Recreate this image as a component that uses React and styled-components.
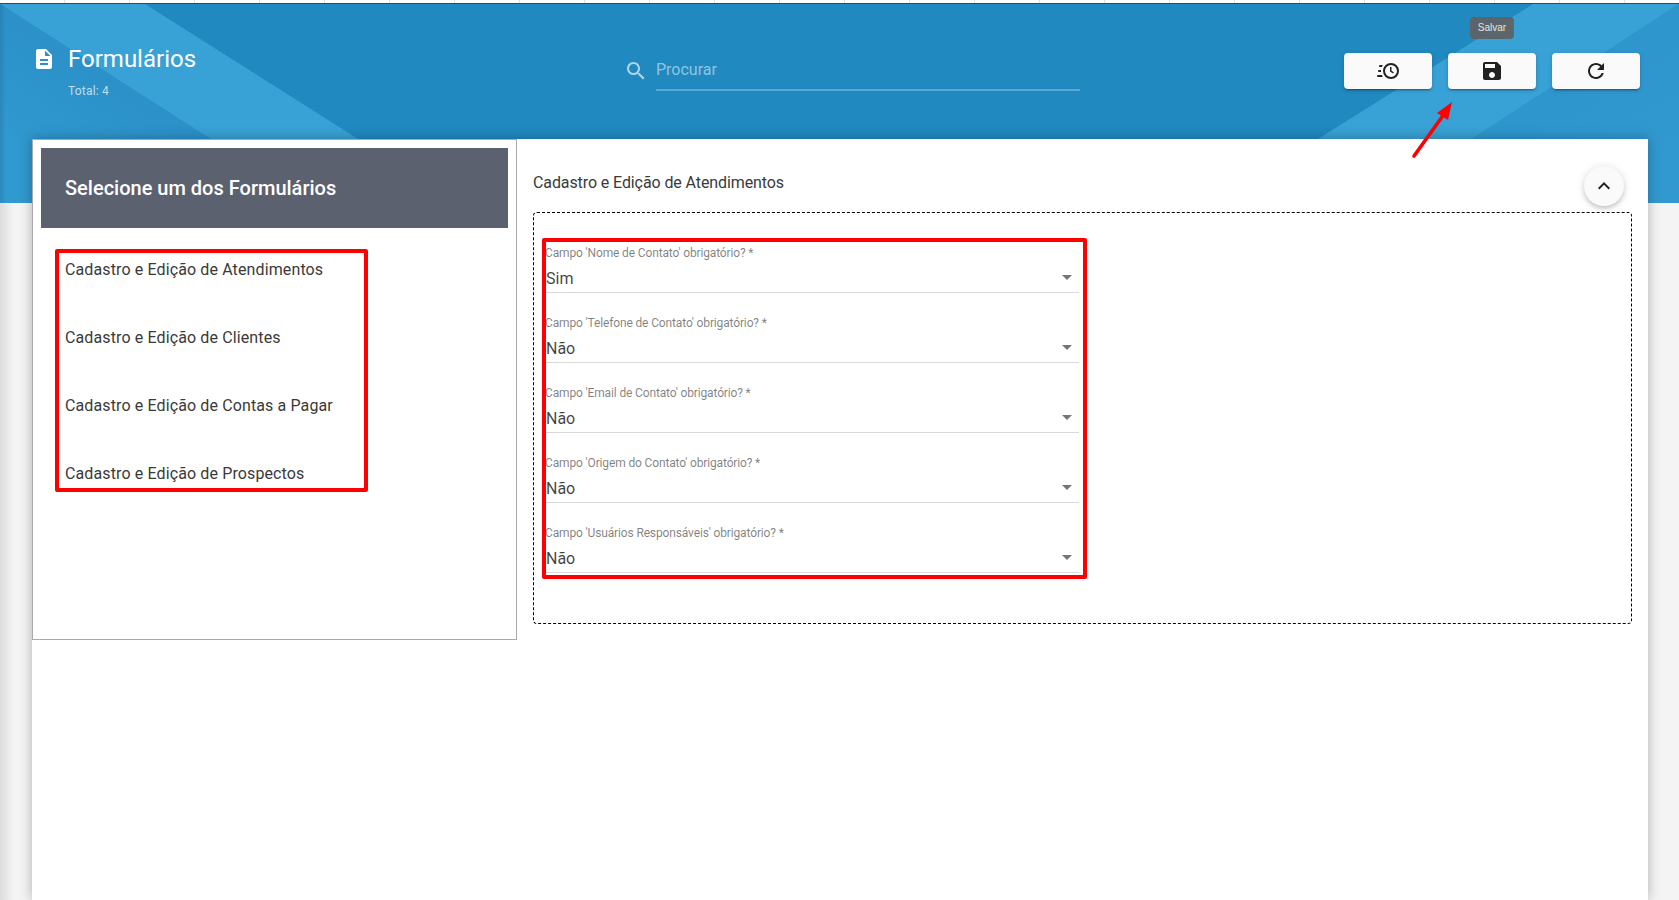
import React from 'react';
import styled, {createGlobalStyle} from 'styled-components';

const GlobalStyle = createGlobalStyle`
  html, body {
    margin: 0;
    height: 100%;
    overflow: hidden;
  }
  body {
    background: #f4f4f4;
    font-family: Roboto, "Liberation Sans", sans-serif;
  }
`

const Page = styled.div`
  height: 900px;
  overflow: hidden;
  background: linear-gradient(to right, #dcdcdc 0, #f4f4f4 14px);
`

const TopStrip = styled.div`
  height: 3px;
  background: repeating-linear-gradient(to right, #fff 0, #fff 64px, #e2e2e2 64px, #e2e2e2 65px);
  border-bottom: 1px solid #1c4f6e;
`

const Header = styled.header`
  position: relative;
  display: flex;
  align-items: flex-start;
  height: 199px;
  background: #2089c0;
  overflow: hidden;
  /* diagonal light bands */
  &::before {
    content: '';
    position: absolute;
    inset: 0;
    background: #38a1d6;
    clip-path: polygon(0 0, 145px 0, 459px 199px, 310px 199px);
  }
  &::after {
    content: '';
    position: absolute;
    inset: 0;
    background: #38a1d6;
    clip-path: polygon(1533px 0, 1679px 0, 1374px 199px, 1216px 199px);
  }
`

const Shade = styled.div`
  position: absolute;
  inset: 0;
  z-index: 1;
  background: ${props => props.$right
    ? 'linear-gradient(147deg, #2e96cd 85%, #3199d0 96%)'
    : 'linear-gradient(to right, rgba(0, 0, 0, 0.1), transparent 6px), linear-gradient(213deg, #2b91c8 85%, #3099cf 95%)'};
  clip-path: ${props => props.$right
    ? 'polygon(1679px 0, 1679px 199px, 1374px 199px)'
    : 'polygon(0 0, 310px 199px, 0 199px)'};
`

const TitleBlock = styled.div`
  position: relative;
  z-index: 2;
  width: 624px;
  padding: 43px 0 0 32px;
  box-sizing: border-box;
  color: #fff;
`

const TitleRow = styled.div`
  display: flex;
  align-items: center;
  gap: 12px;
  height: 24px;
`

const Title = styled.h1`
  margin: 0;
  font-size: 24px;
  font-weight: 400;
  line-height: 24px;
`

const Total = styled.div`
  margin: 12px 0 0 36px;
  font-size: 12px;
  line-height: 16px;
  letter-spacing: 0.2px;
  color: rgba(255, 255, 255, 0.7);
`

const Search = styled.div`
  position: relative;
  z-index: 2;
  display: flex;
  align-items: flex-start;
  gap: 8px;
  width: 456px;
  margin-top: 55px;
  color: rgba(255, 255, 255, 0.65);
`

const SearchField = styled.div`
  flex: 1;
  height: 33px;
  margin-top: -1px;
  font-size: 16px;
  line-height: 24px;
  color: rgba(255, 255, 255, 0.5);
  border-bottom: 2px solid #5aa8d6;
  box-sizing: border-box;
`

const Actions = styled.div`
  position: relative;
  z-index: 2;
  display: flex;
  gap: 16px;
  margin: 49px 39px 0 auto;
`

const ActionButton = styled.button`
  position: relative;
  display: flex;
  align-items: center;
  justify-content: center;
  width: 88px;
  height: 36px;
  padding: 0;
  border: 0;
  border-radius: 4px;
  background: #fafafa;
  color: #212121;
  box-shadow: 0 3px 1px -2px rgba(0, 0, 0, 0.2), 0 2px 2px 0 rgba(0, 0, 0, 0.14), 0 1px 5px 0 rgba(0, 0, 0, 0.12);
`

const Tooltip = styled.span`
  position: absolute;
  top: -36px;
  left: 22px;
  width: 44px;
  height: 22px;
  border-radius: 4px;
  background: rgba(97, 97, 97, 0.9);
  color: #e4e4e4;
  font-size: 10px;
  font-weight: 500;
  line-height: 22px;
  text-align: center;
`

const Main = styled.main`
  position: relative;
  z-index: 3;
  display: flex;
  align-items: flex-start;
  gap: 16px;
  margin: -64px 31px 0 32px;
  height: 761px;
  background: #fff;
  box-shadow: 0 0 12px rgba(0, 0, 0, 0.28);
`

const ListPanel = styled.section`
  flex: none;
  width: 485px;
  height: 501px;
  padding: 8px;
  box-sizing: border-box;
  border: 1px solid #aaa;
`

const ListHeading = styled.h2`
  display: flex;
  align-items: center;
  height: 80px;
  margin: 0;
  padding-left: 24px;
  background: #5c6170;
  color: #fff;
  font-size: 20px;
  font-weight: 500;
`

const ListFrame = styled.ul`
  display: flex;
  flex-direction: column;
  gap: 44px;
  width: 313px;
  margin: 21px 0 0 14px;
  padding: 5px 0 2px 6px;
  box-sizing: border-box;
  list-style: none;
  border: 4px solid #f00;
  border-radius: 2px;
`

const ListItem = styled.li`
  font-size: 16px;
  line-height: 24px;
  letter-spacing: 0.12px;
  color: #3a3a3a;
`

const FormPane = styled.section`
  flex: 1;
  padding-right: 16px;
`

const FormHead = styled.div`
  display: flex;
  align-items: center;
  justify-content: space-between;
  height: 40px;
  margin-top: 27px;
  padding-right: 8px;
`

const FormTitle = styled.div`
  margin-bottom: 6px;
  font-size: 16px;
  line-height: 24px;
  letter-spacing: -0.1px;
  color: #3a3a3a;
`

const RoundButton = styled.button`
  display: flex;
  align-items: center;
  justify-content: center;
  width: 40px;
  height: 40px;
  padding: 0;
  border: 0;
  border-radius: 50%;
  background: #fafafa;
  color: #212121;
  box-shadow: 0 3px 5px -1px rgba(0, 0, 0, 0.2), 0 1px 10px 0 rgba(0, 0, 0, 0.12);
`

const DashedBox = styled.div`
  height: 412px;
  margin-top: 6px;
  padding: 25px 0 0 8px;
  box-sizing: border-box;
  border: 1px dashed #000;
  border-radius: 4px;
`

const FieldsFrame = styled.div`
  position: relative;
  display: flex;
  flex-direction: column;
  gap: 23px;
  width: 545px;
  padding: 8px 8px 6px 3px;
  box-sizing: border-box;
  /* annotation drawn over the fields, it clips the first letter of the labels */
  &::after {
    content: '';
    position: absolute;
    inset: 0;
    border: 4px solid #f00;
    border-radius: 2px;
    pointer-events: none;
  }
`

const Field = styled.div`
  height: 47px;
  box-sizing: border-box;
  border-bottom: 1px solid #d9d9d9;
`

const FieldLabel = styled.div`
  font-size: 12px;
  line-height: 14px;
  letter-spacing: -0.14px;
  color: rgba(0, 0, 0, 0.5);
`

const FieldValue = styled.div`
  display: flex;
  align-items: flex-start;
  justify-content: space-between;
  height: 24px;
  margin-top: 6px;
  padding-left: 1px;
  font-size: 16px;
  line-height: 26px;
  color: rgba(0, 0, 0, 0.75);
  svg {
    margin-top: -1px;
    color: rgba(0, 0, 0, 0.54);
  }
`

const PointerArrow = styled.svg`
  position: absolute;
  left: 1405px;
  top: 95px;
  z-index: 4;
`

const Icon = ({d, size = 24}) => (
  <svg width={size} height={size} viewBox="0 0 24 24" fill="currentColor" aria-hidden="true">
    <path d={d} />
  </svg>
)

const icons = {
  description: 'M14 2H6c-1.1 0-1.99.9-1.99 2L4 20c0 1.1.89 2 1.99 2H18c1.1 0 2-.9 2-2V8l-6-6zm2 16H8v-2h8v2zm0-4H8v-2h8v2zm-3-5V3.5L18.5 9H13z',
  search: 'M15.5 14h-.79l-.28-.27C15.41 12.59 16 11.11 16 9.5 16 5.91 13.09 3 9.5 3S3 5.91 3 9.5 5.91 16 9.5 16c1.61 0 3.09-.59 4.23-1.57l.27.28v.79l5 4.99L20.49 19l-4.99-5zm-6 0C7.01 14 5 11.99 5 9.5S7.01 5 9.5 5 14 7.01 14 9.5 11.99 14 9.5 14z',
  clockFast: 'M15,4A8,8 0 0,1 23,12A8,8 0 0,1 15,20A8,8 0 0,1 7,12A8,8 0 0,1 15,4M15,6A6,6 0 0,0 9,12A6,6 0 0,0 15,18A6,6 0 0,0 21,12A6,6 0 0,0 15,6M14,8H15.5V11.78L17.83,13.15L17.08,14.38L14,12.5V8M2,18A1,1 0 0,1 1,17A1,1 0 0,1 2,16H5.83C6.08,16.7 6.42,17.37 6.83,18H2M3,13A1,1 0 0,1 2,12A1,1 0 0,1 3,11H5.05L5,12L5.05,13H3M4,8A1,1 0 0,1 3,7A1,1 0 0,1 4,6H6.83C6.42,6.63 6.08,7.3 5.83,8H4Z',
  save: 'M17 3H5c-1.11 0-2 .9-2 2v14c0 1.1.89 2 2 2h14c1.1 0 2-.9 2-2V7l-4-4zm-5 16c-1.66 0-3-1.34-3-3s1.34-3 3-3 3 1.34 3 3-1.34 3-3 3zm3-10H5V5h10v4z',
  refresh: 'M17.65 6.35C16.2 4.9 14.21 4 12 4c-4.42 0-7.99 3.58-7.99 8s3.57 8 7.99 8c3.73 0 6.84-2.55 7.73-6h-2.08c-.82 2.33-3.04 4-5.65 4-3.31 0-6-2.69-6-6s2.69-6 6-6c1.66 0 3.14.69 4.22 1.78L13 11h7V4l-2.35 2.35z',
  expandLess: 'M12 8l-6 6 1.41 1.41L12 10.83l4.59 4.58L18 14z',
  dropDown: 'M7 10l5 5 5-5z',
}

const forms = [
  'Cadastro e Edição de Atendimentos',
  'Cadastro e Edição de Clientes',
  'Cadastro e Edição de Contas a Pagar',
  'Cadastro e Edição de Prospectos',
]

const fields = [
  {label: "Campo 'Nome de Contato' obrigatório? *", value: 'Sim'},
  {label: "Campo 'Telefone de Contato' obrigatório? *", value: 'Não'},
  {label: "Campo 'Email de Contato' obrigatório? *", value: 'Não'},
  {label: "Campo 'Origem do Contato' obrigatório? *", value: 'Não'},
  {label: "Campo 'Usuários Responsáveis' obrigatório? *", value: 'Não'},
]

export default function App() {
  return (
    <Page>
      <GlobalStyle />
      <TopStrip />
      <Header>
        <Shade />
        <Shade $right />
        <TitleBlock>
          <TitleRow>
            <Icon d={icons.description} />
            <Title>Formulários</Title>
          </TitleRow>
          <Total>Total: 4</Total>
        </TitleBlock>
        <Search>
          <Icon d={icons.search} />
          <SearchField>Procurar</SearchField>
        </Search>
        <Actions>
          <ActionButton><Icon d={icons.clockFast} /></ActionButton>
          <ActionButton>
            <Tooltip>Salvar</Tooltip>
            <Icon d={icons.save} />
          </ActionButton>
          <ActionButton><Icon d={icons.refresh} /></ActionButton>
        </Actions>
      </Header>
      <Main>
        <ListPanel>
          <ListHeading>Selecione um dos Formulários</ListHeading>
          <ListFrame>
            {forms.map(f => <ListItem key={f}>{f}</ListItem>)}
          </ListFrame>
        </ListPanel>
        <FormPane>
          <FormHead>
            <FormTitle>Cadastro e Edição de Atendimentos</FormTitle>
            <RoundButton><Icon d={icons.expandLess} /></RoundButton>
          </FormHead>
          <DashedBox>
            <FieldsFrame>
              {fields.map(f => (
                <Field key={f.label}>
                  <FieldLabel>{f.label}</FieldLabel>
                  <FieldValue>
                    {f.value}
                    <Icon d={icons.dropDown} />
                  </FieldValue>
                </Field>
              ))}
            </FieldsFrame>
          </DashedBox>
        </FormPane>
      </Main>
      <PointerArrow width="52" height="66" viewBox="0 0 52 66">
        <line x1="9" y1="61" x2="37" y2="22" stroke="#f00" strokeWidth="3.6" strokeLinecap="round" />
        <polygon points="47,7 43,25 32,18" fill="#f00" />
      </PointerArrow>
    </Page>
  )
}
